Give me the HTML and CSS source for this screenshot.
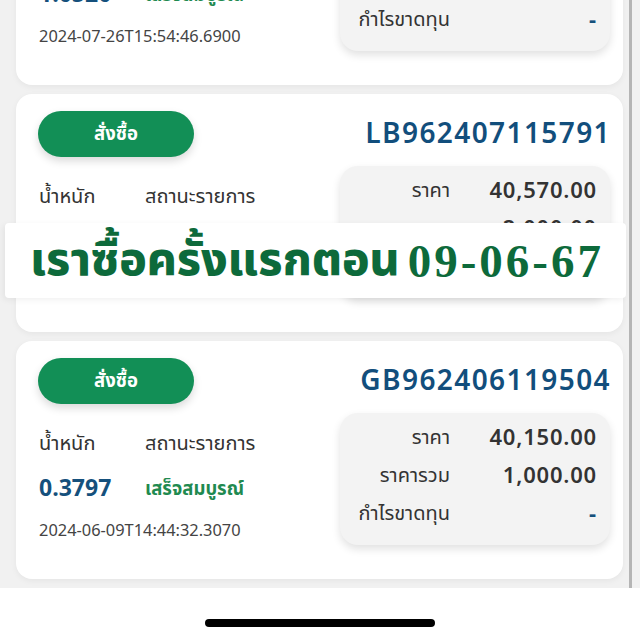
FILE: index.html
```html
<!doctype html>
<html lang="th">
<head>
<meta charset="utf-8">
<title>รายการสั่งซื้อ</title>
<link rel="stylesheet" href="styles.css">
</head>
<body>

	<div class="screen">

		<div class="feed">

			<div class="list">

				<div class="card">
					<div class="card-head">
						<div class="btn-buy">สั่งซื้อ</div>
						<div class="order-id">LB962407263320</div>
					</div>
					<div class="card-body">
						<div class="info">
							<div class="info-grid">
								<span class="lbl">น้ำหนัก</span><span class="lbl">สถานะรายการ</span>
								<span class="weight">1.0520</span><span class="status">เสร็จสมบูรณ์</span>
							</div>
							<div class="stamp">2024-07-26T15:54:46.6900</div>
						</div>
						<div class="price-box">
							<span class="p-lbl">ราคา</span><span class="p-val">40,920.00</span>
							<span class="p-lbl">ราคารวม</span><span class="p-val">3,000.00</span>
							<span class="p-lbl">กำไรขาดทุน</span><span class="p-val dash">-</span>
						</div>
					</div>
				</div>

				<div class="card">
					<div class="card-head">
						<div class="btn-buy">สั่งซื้อ</div>
						<div class="order-id">LB962407115791</div>
					</div>
					<div class="card-body">
						<div class="info">
							<div class="info-grid">
								<span class="lbl">น้ำหนัก</span><span class="lbl">สถานะรายการ</span>
								<span class="weight">0.7395</span><span class="status">เสร็จสมบูรณ์</span>
							</div>
							<div class="stamp">2024-07-11T10:21:05.1180</div>
						</div>
						<div class="price-box">
							<span class="p-lbl">ราคา</span><span class="p-val">40,570.00</span>
							<span class="p-lbl">ราคารวม</span><span class="p-val">2,000.00</span>
							<span class="p-lbl">กำไรขาดทุน</span><span class="p-val dash">-</span>
						</div>
					</div>
				</div>

				<div class="card">
					<div class="card-head">
						<div class="btn-buy">สั่งซื้อ</div>
						<div class="order-id">GB962406119504</div>
					</div>
					<div class="card-body">
						<div class="info">
							<div class="info-grid">
								<span class="lbl">น้ำหนัก</span><span class="lbl">สถานะรายการ</span>
								<span class="weight">0.3797</span><span class="status">เสร็จสมบูรณ์</span>
							</div>
							<div class="stamp">2024-06-09T14:44:32.3070</div>
						</div>
						<div class="price-box">
							<span class="p-lbl">ราคา</span><span class="p-val">40,150.00</span>
							<span class="p-lbl">ราคารวม</span><span class="p-val">1,000.00</span>
							<span class="p-lbl">กำไรขาดทุน</span><span class="p-val dash">-</span>
						</div>
					</div>
				</div>

			</div>

			<div class="scrollbar"></div>

		</div>

		<div class="home-area"><div class="home-bar"></div></div>

		<div class="banner">เราซื้อครั้งแรกตอน <span class="banner-date">09-06-67</span></div>

	</div>

</body>
</html>
```

FILE: styles.css
```css
/* order history, scrolled list with caption strip on top */

	html, body { margin: 0; height: 100%; background: #fff; }

	body { font-family: "Noto Sans Thai", "Noto Sans", "Liberation Sans", sans-serif; color: #333; }

	.screen { width: 640px; height: 640px; overflow: hidden; position: relative; background: #fff; }

	.feed { height: 588px; overflow: hidden; background: #f1f1f1; position: relative; }

	.list { display: flex; flex-direction: column; gap: 9px; margin-top: -153px; padding: 0 17px 0 16px; }

	.card { background: #fff; border-radius: 16px; box-shadow: 0 2px 6px rgba( 0, 0, 0, .05 );
		padding: 17px 13px 34px 22px; }

	.card-head { display: flex; align-items: center; justify-content: space-between; height: 46px; }

	.btn-buy { width: 156px; height: 46px; border-radius: 23px; background: #128f56; color: #fff;
		display: flex; align-items: center; justify-content: center; font-size: 18.5px; font-weight: 700;
		box-shadow: 0 4px 8px rgba( 0, 0, 0, .15 ); }

	.order-id { font-size: 28px; font-weight: 600; color: #124e7c; letter-spacing: 1.4px; margin-right: -1px; }

	.card-body { display: flex; justify-content: space-between; align-items: flex-start; margin-top: 9px; }

	.info { padding: 19px 0 0 1px; }

	.info-grid { display: grid; grid-template-columns: 106px auto; row-gap: 21px; align-items: center; }

	.lbl { font-size: 20px; line-height: 24px; color: #333; }

	.weight { font-size: 23px; font-weight: 700; color: #15507c; line-height: 24px; }

	.status { font-size: 18.5px; font-weight: 700; color: #1f8a50; line-height: 24px; }

	.stamp { font-size: 16.4px; color: #444; margin-top: 18px; line-height: 24px; }

	.price-box { width: 270px; height: 132px; box-sizing: border-box; background: #f3f3f3; border-radius: 18px;
		box-shadow: 0 4px 8px rgba( 0, 0, 0, .12 ); padding: 6px 14px 14px 13px;
		display: grid; grid-template-columns: 97px 1fr; grid-auto-rows: 38px; align-items: center; column-gap: 10px; }

	.p-lbl { font-size: 20px; text-align: right; color: #333; white-space: nowrap; }

	.p-val { font-size: 22px; font-weight: 600; letter-spacing: .8px; margin-right: -1px; text-align: right; color: #333; }

	.p-val.dash { color: #15507c; font-weight: 700; }

	.scrollbar { position: absolute; top: 0; bottom: 0; left: 629px; width: 3px; background: #b5b5b5; }

	.home-area { height: 52px; display: flex; justify-content: center; padding-top: 31px; box-sizing: border-box; }

	.home-bar { width: 230px; height: 8px; border-radius: 4px; background: #000; }

	.banner { position: absolute; left: 5px; width: 621px; top: 223px; height: 75px; background: #fff;
		border-radius: 4px; box-shadow: -2px 2px 6px rgba( 0, 0, 0, .06 );
		display: flex; align-items: center; justify-content: center; gap: 8px;
		font-family: "Liberation Serif", "Noto Sans Thai", serif;
		font-size: 46px; font-weight: 800; color: #0d6a3b; white-space: nowrap; }

	.banner-date { font-size: 47px; letter-spacing: 3px; margin-right: -3px; font-weight: 700; }
```
